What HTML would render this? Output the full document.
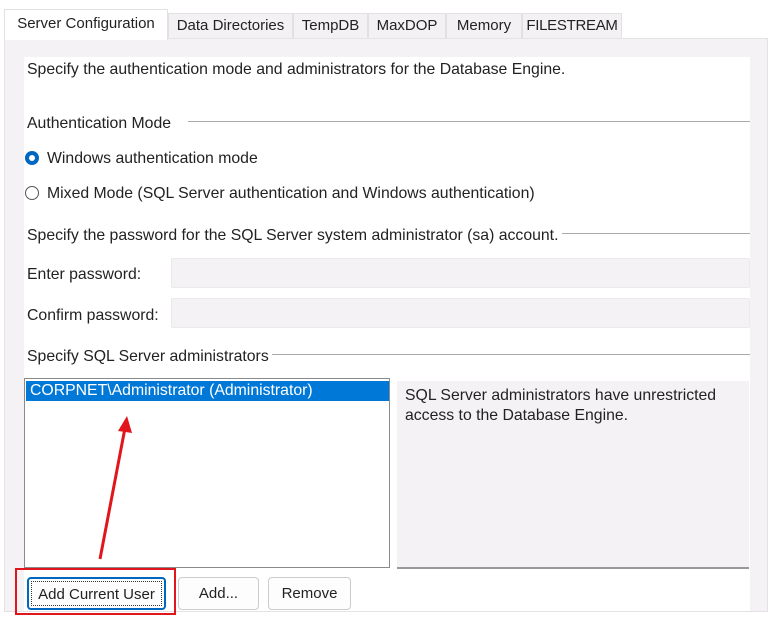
<!DOCTYPE html>
<html><head><style>
body{margin:0;width:768px;height:620px;background:#fff;position:relative;overflow:hidden;font-family:"Liberation Sans",sans-serif;font-size:15.8px;color:#222}
.a{position:absolute;white-space:nowrap}
.tab{position:absolute;top:13px;height:25px;background:#f4f1f4;border:1px solid #e2e0e2;border-bottom:none;box-sizing:border-box;text-align:center;line-height:24px;font-size:15px;white-space:nowrap}
.line{position:absolute;height:1px;background:#a8a8a8}
.fld{position:absolute;left:171px;width:579px;height:30px;background:#f5f2f5;border:1px solid #ece9ec;box-sizing:border-box;border-radius:2px}
.btn{position:absolute;top:577px;height:33px;background:#fdfdfd;border:1px solid #ccc;border-radius:4px;box-sizing:border-box;text-align:center;line-height:31px;font-size:15px}
</style></head><body>
<div class="a" style="left:4px;top:38px;width:764px;height:574px;background:#f5f2f5;border:1px solid #e4e2e4;box-sizing:border-box"></div>
<div class="tab" style="left:4px;top:9px;width:164px;height:31px;background:#fff;line-height:28px">Server Configuration</div>
<div class="tab" style="left:168px;width:125px">Data Directories</div>
<div class="tab" style="left:293px;width:75px">TempDB</div>
<div class="tab" style="left:368px;width:78px">MaxDOP</div>
<div class="tab" style="left:446px;width:76px">Memory</div>
<div class="tab" style="left:522px;width:100px;letter-spacing:-0.3px">FILESTREAM</div>
<div class="a" style="left:24px;top:57px;width:726px;height:554px;background:#fff"></div>
<div class="a" style="left:27px;top:61px">Specify the authentication mode and administrators for the Database Engine.</div>
<div class="a" style="left:27px;top:115px">Authentication Mode</div>
<div class="line" style="left:188px;width:562px;top:121px"></div>
<div class="a" style="left:25px;top:151px;width:14px;height:14px;border-radius:50%;background:#0067c0"></div>
<div class="a" style="left:29px;top:155px;width:6px;height:6px;border-radius:50%;background:#fff"></div>
<div class="a" style="left:47px;top:150px">Windows authentication mode</div>
<div class="a" style="left:25px;top:186px;width:14px;height:14px;border-radius:50%;border:1px solid #555;box-sizing:border-box"></div>
<div class="a" style="left:47px;top:185px">Mixed Mode (SQL Server authentication and Windows authentication)</div>
<div class="a" style="left:27px;top:227px">Specify the password for the SQL Server system administrator (sa) account.</div>
<div class="line" style="left:562px;width:188px;top:233px"></div>
<div class="a" style="left:27px;top:266px">Enter password:</div>
<div class="fld" style="top:258px"></div>
<div class="a" style="left:27px;top:307px">Confirm password:</div>
<div class="fld" style="top:298px"></div>
<div class="a" style="left:27px;top:348px">Specify SQL Server administrators</div>
<div class="line" style="left:272px;width:478px;top:354px"></div>
<div class="a" style="left:24px;top:378px;width:366px;height:190px;border:1px solid #8a8a8a;box-sizing:border-box;background:#fff"></div>
<div class="a" style="left:26px;top:381px;width:363px;height:20px;background:#0078d7;color:#fff;line-height:20px;padding-left:4px;box-sizing:border-box">CORPNET\Administrator (Administrator)</div>
<div class="a" style="left:397px;top:381px;width:352px;height:188px;background:#f5f2f5;border-bottom:2px solid #999;box-sizing:border-box"></div>
<div class="a" style="left:405px;top:386px;line-height:20px">SQL Server administrators have unrestricted<br>access to the Database Engine.</div>
<div class="btn" style="left:27px;width:139px;border:2px solid #0067c0">Add Current User</div>
<div class="a" style="left:31px;top:581px;width:131px;height:25px;border:1px dotted #333;box-sizing:border-box"></div>
<div class="btn" style="left:178px;width:81px">Add...</div>
<div class="btn" style="left:268px;width:83px">Remove</div>
<div class="a" style="left:15px;top:568px;width:161px;height:47px;border:2px solid #e0161c;box-sizing:border-box"></div>
<svg class="a" style="left:0;top:0" width="768" height="620"><line x1="100" y1="559" x2="125" y2="428" stroke="#e0161c" stroke-width="3"/><polygon points="127,416 118,431 132,433" fill="#e0161c"/></svg>
</body></html>
